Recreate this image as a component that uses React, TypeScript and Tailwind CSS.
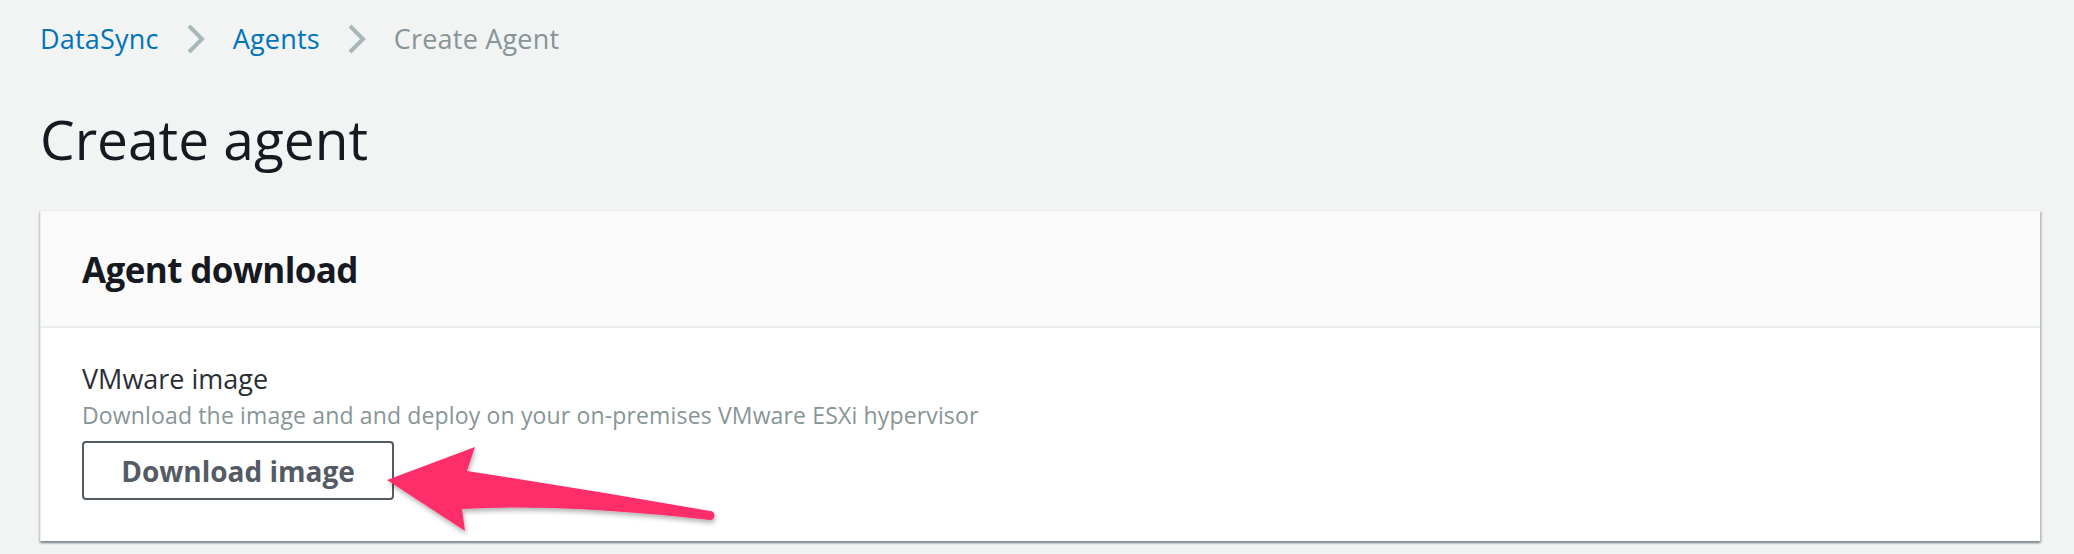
import React from 'react';

const font = { fontFamily: '"Open Sans", "Liberation Sans", sans-serif' };

const Chevron = () => (
  <svg width="18" height="30" viewBox="0 0 18 30" className="shrink-0">
    <path
      d="M2 2 L15 15 L2 28"
      fill="none"
      stroke="#aab7b8"
      strokeWidth="4"
    />
  </svg>
);

const Breadcrumbs = () => (
  <nav className="flex items-center h-[40px] text-[27px] leading-[40px]">
    <a className="text-[#0073bb] tracking-[0.2px]">DataSync</a>
    <span className="mx-[28px] flex items-center">
      <Chevron />
    </span>
    <a className="text-[#0073bb] tracking-[0.2px]">Agents</a>
    <span className="mx-[28px] flex items-center">
      <Chevron />
    </span>
    <span className="text-[#879596] tracking-[0.2px]">Create Agent</span>
  </nav>
);

const Arrow = () => (
  <svg
    className="absolute left-0 top-0 pointer-events-none"
    width="2074"
    height="554"
    viewBox="0 0 2074 554"
  >
    <defs>
      <filter id="arrowShadow" x="-20%" y="-40%" width="140%" height="180%">
        <feDropShadow dx="1" dy="3" stdDeviation="2.5" floodColor="#000" floodOpacity="0.3" />
      </filter>
    </defs>
    <path
      d="M387 480 L475 447 L467 471 Q590 490 710 511 A4.5 4.5 0 0 1 710 520 Q560 503 462 509 L465 531 Z"
      fill="#fe2f6a"
      filter="url(#arrowShadow)"
    />
  </svg>
);

export default function App() {
  return (
    <div
      className="relative w-[2074px] h-[554px] overflow-hidden bg-[#f2f3f3] pl-[40px] pr-[34px] pt-[19px]"
      style={font}
    >
      <Breadcrumbs />
      <h1 className="mt-[48px] text-[55px] leading-[64px] font-normal text-[#16191f]">
        Create agent
      </h1>
      <section className="mt-[39px] bg-white border-t border-l border-[#eaeded] shadow-[0_2px_2px_0_rgba(0,28,36,0.35),2px_2px_2px_0_rgba(0,28,36,0.15),-1px_2px_2px_0_rgba(0,28,36,0.1)]">
        <div className="h-[117px] bg-[#fafafa] border-b-2 border-[#eaeded] pl-[41px] pt-[37px]">
          <h2 className="text-[35px] leading-[44px] font-bold tracking-[-0.6px] text-[#16191f]">
            Agent download
          </h2>
        </div>
        <div className="pl-[41px] pt-[33px] pb-[41px]">
          <div className="text-[27px] leading-[36px] text-[#2a2f36]">VMware image</div>
          <div className="mt-[3px] text-[23px] leading-[30px] tracking-[0.15px] text-[#879596]">
            Download the image and and deploy on your on-premises VMware ESXi hypervisor
          </div>
          <button className="mt-[11px] w-[312px] h-[59px] flex items-center justify-center border-2 border-[#545b64] rounded-[4px] bg-white text-[28px] font-bold text-[#545b64]">
            Download image
          </button>
        </div>
      </section>
      <Arrow />
    </div>
  );
}
